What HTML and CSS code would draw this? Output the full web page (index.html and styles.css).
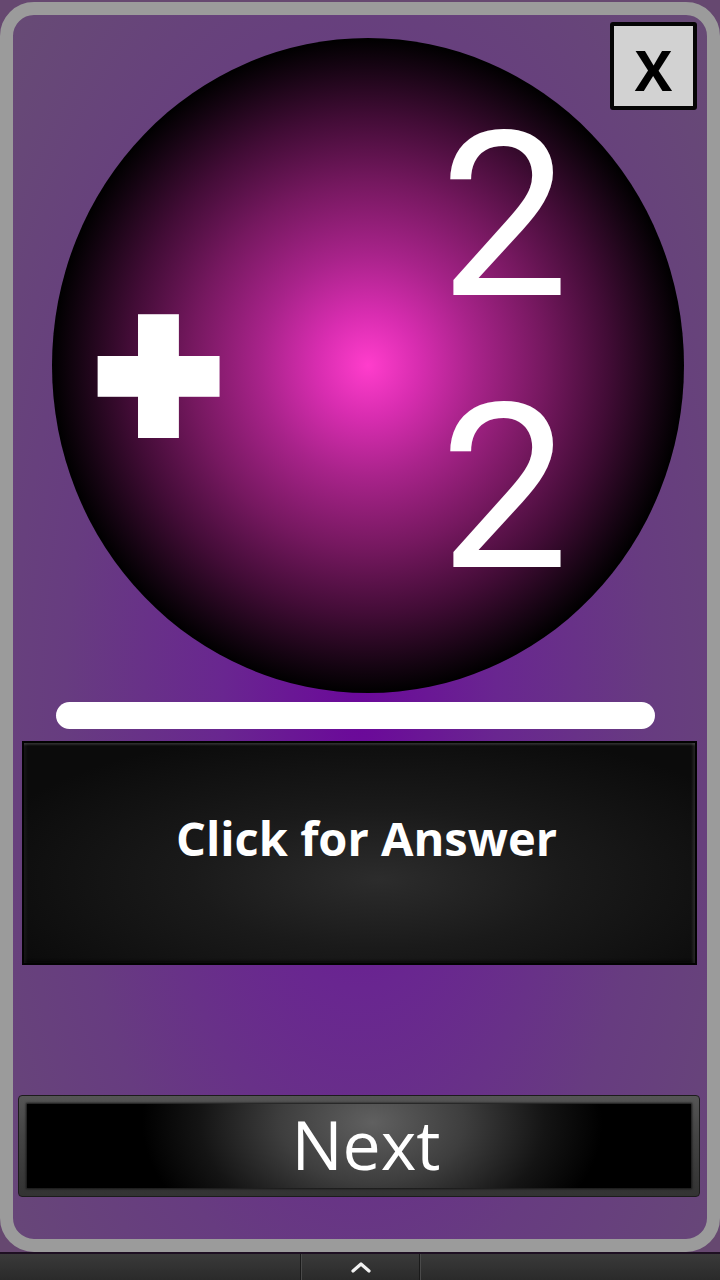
FILE: index.html
```html
<!DOCTYPE html>
<html>
<head>
<meta charset="utf-8">
<link rel="stylesheet" href="styles.css">
</head>
<body>
<div class="screen">
  <div class="frame">
    <div class="card">
      <button class="close">X</button>
      <div class="ball">
        <span class="plus">+</span>
        <div class="numbers">
          <span class="num">2</span>
          <span class="num">2</span>
        </div>
      </div>
      <div class="rule"></div>
      <div class="answer"><span>Click for Answer</span></div>
      <div class="next"><div class="next-face">Next</div></div>
    </div>
  </div>
  <div class="divider"></div>
  <nav class="navbar">
    <div class="seg seg-left"></div>
    <div class="seg seg-mid">
      <svg width="24" height="14" viewBox="0 0 24 14"><polyline points="4,11 12,4 20,11" fill="none" stroke="#f2f2f2" stroke-width="3.2" stroke-linecap="round" stroke-linejoin="round"/></svg>
    </div>
    <div class="seg seg-right"></div>
  </nav>
</div>
</body>
</html>
```
FILE: styles.css
```css
html, body {
  margin: 0;
  padding: 0;
  width: 720px;
  height: 1280px;
  overflow: hidden;
  background: #664870;
}
.screen {
  width: 720px;
  height: 1280px;
  display: flex;
  flex-direction: column;
}
.frame {
  margin-top: 2px;
  height: 1250px;
  box-sizing: border-box;
  border: 13px solid #9b9b9b;
  border-radius: 34px;
  overflow: hidden;
  background: radial-gradient(ellipse farthest-corner at 50% 57%, #6b089a 0%, #692690 28%, #673c80 60%, #674b75 100%);
}
.card {
  position: relative;
  height: 100%;
  display: flex;
  flex-direction: column;
  align-items: flex-start;
  border-radius: 21px;
}
.close {
  position: absolute;
  top: 7px;
  right: 10px;
  width: 87px;
  height: 88px;
  box-sizing: border-box;
  border: 4px solid #050505;
  border-radius: 3px;
  background: #d2d2d2;
  color: #000;
  font-family: "Open Sans", "Liberation Sans", sans-serif;
  font-weight: 700;
  font-size: 56px;
  line-height: 1;
  padding: 6px 0 0 0;
  margin: 0;
  display: flex;
  align-items: center;
  justify-content: center;
}
.ball {
  margin: 23px 0 0 39px;
  width: 632px;
  height: 655px;
  border-radius: 50%;
  background: radial-gradient(ellipse closest-side at 50% 50%, #ff3dcc 0%, #d82db0 16%, #a8238a 34%, #75185f 56%, #420c36 76%, #150412 92%, #000 100%);
  display: flex;
  align-items: flex-start;
  color: #fff;
}
.plus {
  margin: 232px 0 0 46px;
  font-family: "Liberation Sans", Arial, sans-serif;
  font-weight: 700;
  font-size: 207px;
  line-height: 207px;
  -webkit-text-stroke: 18px #fff;
}
.numbers {
  margin: 43px 115px 0 auto;
  display: flex;
  flex-direction: column;
  font-family: Roboto, "Open Sans", sans-serif;
  font-size: 230px;
  line-height: 272px;
}
.num {
  display: block;
  height: 272px;
}
.rule {
  margin: 9px 0 0 43px;
  width: 599px;
  height: 27px;
  border-radius: 14px;
  background: #fff;
}
.answer {
  margin: 12px 0 0 9px;
  width: 675px;
  height: 224px;
  box-sizing: border-box;
  border: 2px solid #020202;
  background: radial-gradient(ellipse 62% 70% at 53% 62%, #2c2c2c 0%, #1a1a1a 45%, #0b0b0b 100%);
  box-shadow: inset 0 3px 2px -1px rgba(255,255,255,0.13), inset -3px 0 3px -1px rgba(255,255,255,0.12), inset 3px 0 3px -1px rgba(255,255,255,0.06), inset 0 -3px 3px -1px rgba(0,0,0,0.7);
  display: flex;
  align-items: center;
  justify-content: center;
  padding: 0 0 30px 14px;
  color: #fff;
  font-family: "Open Sans", "Liberation Sans", sans-serif;
  font-weight: 700;
  font-size: 47px;
}
.next {
  margin: 130px 0 0 5px;
  width: 682px;
  height: 102px;
  box-sizing: border-box;
  padding: 8px;
  border: 1px solid #1c1c1c;
  border-radius: 4px;
  background: linear-gradient(180deg, #555 0%, #444 40%, #333 100%);
  display: flex;
}
.next-face {
  flex: 1;
  background: radial-gradient(ellipse 230px 150px at 52% 22%, #606060 0%, #3e3e3e 40%, #141414 75%, #000 100%);
  box-shadow: 0 0 2px 1px #151515;
  display: flex;
  align-items: center;
  justify-content: center;
  padding: 0 0 5px 14px;
  color: #fff;
  font-family: "Open Sans", "Liberation Sans", sans-serif;
  font-size: 68px;
}
.divider {
  height: 2px;
  background: #1e0f22;
}
.navbar {
  flex: 1;
  display: flex;
  background: linear-gradient(180deg, #3a3a3a 0%, #2a2a2a 100%);
}
.seg {
  height: 100%;
}
.seg-left {
  width: 300px;
  border-right: 1px solid #1a1a1a;
}
.seg-mid {
  width: 117px;
  border-left: 1px solid #4a4a4a;
  border-right: 1px solid #1a1a1a;
  display: flex;
  align-items: center;
  justify-content: center;
}
.seg-right {
  flex: 1;
  border-left: 1px solid #4a4a4a;
}
```
